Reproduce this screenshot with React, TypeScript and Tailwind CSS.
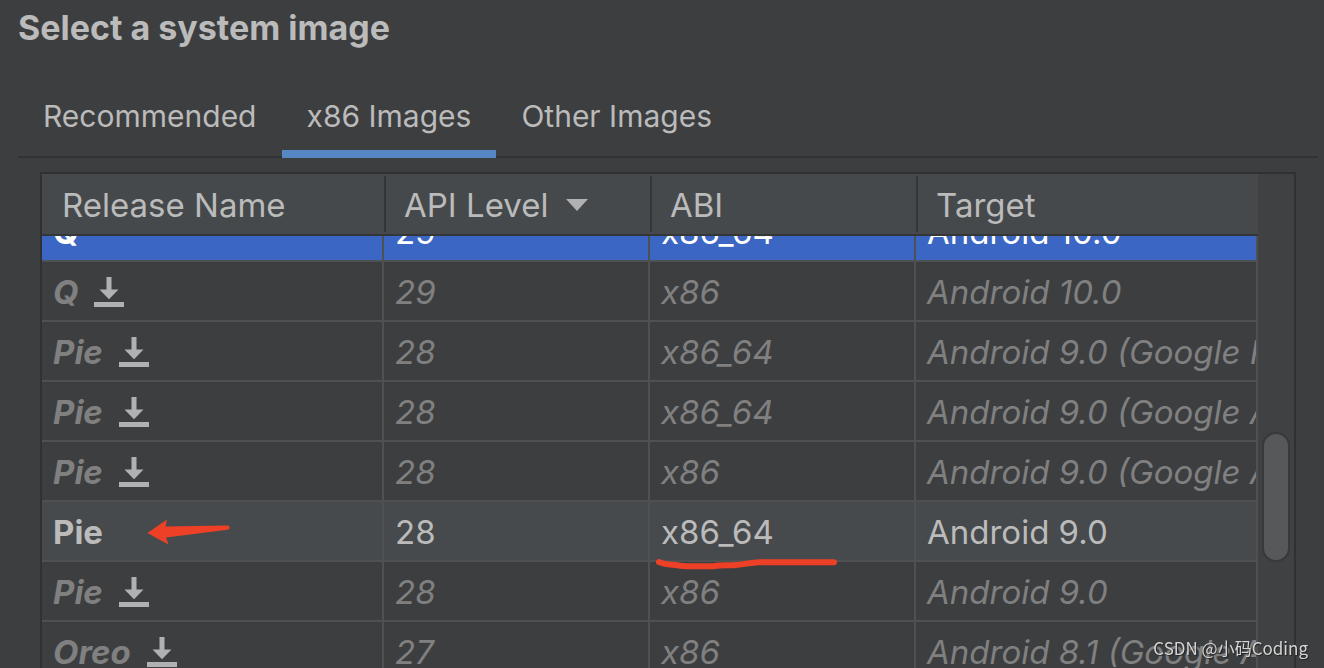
import { useLayoutEffect, useRef, useState } from "react"
import clsx from "clsx"

interface SystemImage {
  id: number
  release: string
  api: number
  abi: string
  target: string
  installed: boolean
}

const TABS = ["Recommended", "x86 Images", "Other Images"]

const COLUMNS = [
  { name: "Release Name", width: "w-[342px]" },
  { name: "API Level", width: "w-[266px]" },
  { name: "ABI", width: "w-[266px]" },
  { name: "Target", width: "" },
]

const IMAGES: SystemImage[] = [
  { id: 1, release: "Q", api: 29, abi: "x86_64", target: "Android 10.0", installed: true },
  { id: 2, release: "Q", api: 29, abi: "x86", target: "Android 10.0", installed: false },
  { id: 3, release: "Pie", api: 28, abi: "x86_64", target: "Android 9.0 (Google Play)", installed: false },
  { id: 4, release: "Pie", api: 28, abi: "x86_64", target: "Android 9.0 (Google APIs)", installed: false },
  { id: 5, release: "Pie", api: 28, abi: "x86", target: "Android 9.0 (Google APIs)", installed: false },
  { id: 6, release: "Pie", api: 28, abi: "x86_64", target: "Android 9.0", installed: true },
  { id: 7, release: "Pie", api: 28, abi: "x86", target: "Android 9.0", installed: false },
  { id: 8, release: "Oreo", api: 27, abi: "x86", target: "Android 8.1 (Google APIs)", installed: false },
]

const SCROLL_OFFSET = 34
const MARKED_ID = 6

function DownloadIcon() {
  return (
    <svg viewBox="0 0 30 30" className="h-[30px] w-[30px] shrink-0 fill-[#afb1b3]" aria-hidden="true">
      <path d="M12.5 0h5v12.5h7L15 22.3 5.5 12.5h7z" />
      <path d="M0 25h30v5H0z" />
    </svg>
  )
}

function RedArrow() {
  return (
    <svg viewBox="0 0 84 26" className="h-[26px] w-[84px] shrink-0 fill-[#ee4026]" aria-hidden="true">
      <path d="M.5 14 20 .5 18.5 7.5 80.5 6.5q2.5 0 2 2.5-.2 1.500-2 1.700L19 18.500 21.500 25.500Q12 20.500 .5 14z" />
    </svg>
  )
}

function RedUnderline() {
  return (
    <svg
      viewBox="0 0 182 12"
      className="absolute -bottom-[10px] left-[6px] z-[5] h-3 w-[182px] fill-none stroke-[#ee4026]"
      strokeWidth="6"
      strokeLinecap="round"
      strokeLinejoin="round"
      aria-hidden="true"
    >
      <path d="M3 4C10 7 16 6.500 21 7.200 26 8 29 8.200 31 8.200H58C64 7 74 7.600 80 7 90 6 96 4.500 102 4.200H178" />
    </svg>
  )
}

export default function App() {
  const [activeTab, setActiveTab] = useState("x86 Images")
  const [selectedId, setSelectedId] = useState(1)
  const scroller = useRef<HTMLDivElement>(null)

  // Keep the list scrolled partway into the first row
  useLayoutEffect(() => {
    if (scroller.current) scroller.current.scrollTop = SCROLL_OFFSET
  }, [])

  return (
    <div className="relative flex h-screen flex-col overflow-hidden bg-[#3d3e40] pt-2 font-['Inter',sans-serif] text-[#bbbbbb]">
      <h1 className="pl-[18px] text-[34px] leading-10 font-bold">Select a system image</h1>

      <div role="tablist" className="mt-8 mr-[6px] ml-[18px] flex h-[78px] border-b-2 border-[#323234]">
        {TABS.map((tab) => (
          <button
            key={tab}
            role="tab"
            aria-selected={activeTab === tab}
            onClick={() => setActiveTab(tab)}
            className={clsx(
              "-mb-[2px] border-b-8 px-[25px] pt-[2px] text-[30px] whitespace-nowrap",
              activeTab === tab ? "border-[#5888c3]" : "border-transparent",
            )}
          >
            {tab}
          </button>
        ))}
      </div>

      <div className="mt-[14px] mr-7 ml-10 flex min-h-0 flex-1 border-2 border-b-0 border-[#303132]">
        <div ref={scroller} className="min-w-0 flex-1 overflow-y-auto [scrollbar-width:none]">
          <table className="w-full table-fixed border-separate border-spacing-0 text-left text-[33px] leading-10">
            <thead className="sticky top-0 z-10">
              <tr>
                {COLUMNS.map((column, i) => (
                  <th
                    key={column.name}
                    className={clsx("h-[62px] border-b-2 border-[#343638] bg-[#45494b] p-0 font-normal", column.width)}
                  >
                    <button
                      className={clsx(
                        "flex h-14 w-full items-center gap-[18px] pt-[2px]",
                        i > 0 ? "border-l-2 border-[#343638] pl-[18px]" : "pl-5",
                      )}
                    >
                      {column.name}
                      {column.name === "API Level" && (
                        <svg viewBox="0 0 22 12" className="h-3 w-[22px] fill-[#afb1b3]" aria-hidden="true">
                          <path d="M0 0h22L11 12z" />
                        </svg>
                      )}
                    </button>
                  </th>
                ))}
              </tr>
            </thead>
            <tbody>
              {IMAGES.map((image) => {
                const selected = image.id === selectedId
                const marked = image.id === MARKED_ID

                return (
                  <tr
                    key={image.id}
                    onClick={() => setSelectedId(image.id)}
                    className={clsx(
                      "[&>td]:h-[60px] [&>td]:border-r-2 [&>td]:border-b-2 [&>td]:border-[#4f5052] [&>td]:pt-[2px] [&>td]:pb-0 [&>td]:pl-[11px]",
                      selected && "bg-[#3c66c4] text-white",
                      !selected && marked && "bg-[#464a4c]",
                      !image.installed && "text-[#808080] italic",
                    )}
                  >
                    <td>
                      <div className="flex items-center gap-4 font-bold">
                        {image.release}
                        {!image.installed && <DownloadIcon />}
                        {marked && <span className="pl-7"><RedArrow /></span>}
                      </div>
                    </td>
                    <td>{image.api}</td>
                    <td className="relative">
                      {image.abi}
                      {marked && <RedUnderline />}
                    </td>
                    <td className="overflow-hidden whitespace-nowrap">{image.target}</td>
                  </tr>
                )
              })}
            </tbody>
          </table>
        </div>

        <div className="w-9 bg-[#3f4142] px-1 pt-[258px]">
          <div className="h-[130px] rounded-full border-2 border-[#38393b] bg-[#57585a]" />
        </div>
      </div>

      <span className="absolute right-4 bottom-2 z-20 font-['Noto_Sans_CJK_SC',sans-serif] text-[17px] leading-6 text-[#d4d4d4] [text-shadow:1px_1px_1px_#222]">
        CSDN @小码Coding
      </span>
    </div>
  )
}
